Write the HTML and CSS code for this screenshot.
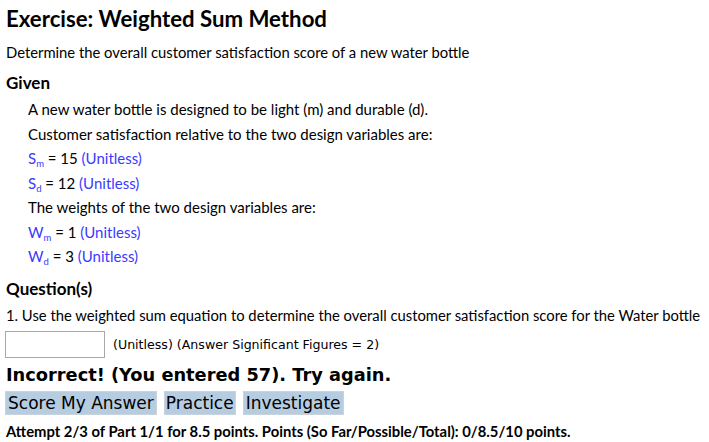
FILE: index.html
```html
<!DOCTYPE html>
<html>
<head>
<meta charset="utf-8">
<link rel="stylesheet" href="styles.css">
</head>
<body>
<div class="page">
  <h1 class="title">Exercise: Weighted Sum Method</h1>
  <p class="desc">Determine the overall customer satisfaction score of a new water bottle</p>
  <h2 class="section">Given</h2>
  <div class="given">
    <div class="line">A new water bottle is designed to be light (m) and durable (d).</div>
    <div class="line">Customer satisfaction relative to the two design variables are:</div>
    <div class="line"><span class="var">S<sub>m</sub></span> = 15 <span class="unit">(Unitless)</span></div>
    <div class="line"><span class="var">S<sub>d</sub></span> = 12 <span class="unit">(Unitless)</span></div>
    <div class="line">The weights of the two design variables are:</div>
    <div class="line"><span class="var">W<sub>m</sub></span> = 1 <span class="unit">(Unitless)</span></div>
    <div class="line"><span class="var">W<sub>d</sub></span> = 3 <span class="unit">(Unitless)</span></div>
  </div>
  <h2 class="section q">Question(s)</h2>
  <p class="question">1. Use the weighted sum equation to determine the overall customer satisfaction score for the Water bottle</p>
  <div class="answer-row">
    <input class="answer" type="text">
    <span class="hint">(Unitless) (Answer Significant Figures = 2)</span>
  </div>
  <div class="feedback">Incorrect! (You entered 57). Try again.</div>
  <div class="buttons">
    <button class="btn">Score My Answer</button>
    <button class="btn">Practice</button>
    <button class="btn wide">Investigate</button>
  </div>
  <div class="attempt">Attempt 2/3 of Part 1/1 for 8.5 points. Points (So Far/Possible/Total): 0/8.5/10 points.</div>
</div>
</body>
</html>
```
FILE: styles.css
```css
html, body {
  margin: 0;
  padding: 0;
  background: #ffffff;
}
.page {
  padding: 0 6px;
  font-family: Lato, "Open Sans", sans-serif;
  color: #000;
}
.title {
  margin: 0;
  padding-top: 4px;
  font-size: 22.2px;
  line-height: 30px;
  font-weight: 700;
}
.desc {
  margin: 6px 0 0;
  font-size: 14.8px;
  line-height: 24px;
}
.section {
  margin: 6px 0 0;
  font-size: 17px;
  line-height: 26px;
  font-weight: 700;
}
.given {
  margin-top: 1px;
  padding-left: 22px;
}
.line {
  font-size: 15px;
  line-height: 24.5px;
  height: 24.5px;
}
.var, .unit {
  color: #3a3aff;
}
sub {
  font-size: 9.5px;
  line-height: 0;
  vertical-align: -3px;
}
.section.q {
  margin-top: 7px;
}
.question {
  margin: 1px 0 0;
  font-size: 14.8px;
  line-height: 24px;
}
.answer-row {
  margin-top: 4px;
  display: flex;
  align-items: center;
  margin-left: -1px;
}
.answer {
  box-sizing: border-box;
  width: 100px;
  height: 27px;
  margin: 0;
  border: 1px solid #a9a9a9;
  padding: 2px;
  background: #fff;
}
.hint {
  margin-left: 8px;
  font-family: "DejaVu Sans", Verdana, sans-serif;
  font-size: 12.6px;
}
.feedback {
  margin-top: 5px;
  font-family: "DejaVu Sans", Verdana, sans-serif;
  font-weight: 700;
  font-size: 17.8px;
  line-height: 24px;
}
.buttons {
  margin-top: 4px;
  margin-left: -1px;
  display: flex;
  gap: 7px;
}
.btn {
  height: 24px;
  margin: 0;
  padding: 0 2px;
  border: 1px solid #c9d3dd;
  background: #b6cce0;
  font-family: "DejaVu Sans", Verdana, sans-serif;
  font-size: 17px;
  line-height: 22px;
  color: #000;
}
.btn + .btn {
  padding: 0 1px;
}
.btn.wide {
  padding: 0 2px;
}
.attempt {
  margin-top: 7px;
  font-size: 14.8px;
  font-weight: 700;
  line-height: 18px;
}
```
